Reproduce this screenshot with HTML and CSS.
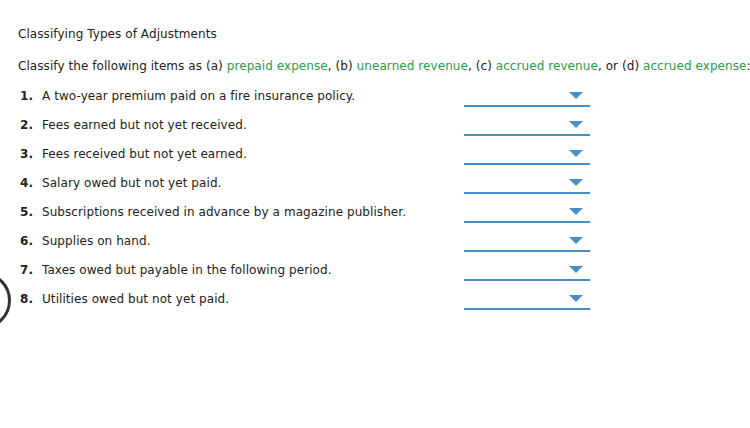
FILE: index.html
```html
<!DOCTYPE html>
<html>
<head>
<meta charset="utf-8">
<link rel="stylesheet" href="styles.css">
</head>
<body>
<div class="page">
  <div class="title">Classifying Types of Adjustments</div>
  <div class="intro">Classify the following items as (a) <span class="g">prepaid expense</span>, (b) <span class="g">unearned revenue</span>, (c) <span class="g">accrued revenue</span>, or (d) <span class="g">accrued expense</span>:</div>
  <ol class="items">
    <li class="item"><span class="num">1.</span><span class="text">A two-year premium paid on a fire insurance policy.</span><span class="sel"><span class="tri"></span></span></li>
    <li class="item"><span class="num">2.</span><span class="text">Fees earned but not yet received.</span><span class="sel"><span class="tri"></span></span></li>
    <li class="item"><span class="num">3.</span><span class="text">Fees received but not yet earned.</span><span class="sel"><span class="tri"></span></span></li>
    <li class="item"><span class="num">4.</span><span class="text">Salary owed but not yet paid.</span><span class="sel"><span class="tri"></span></span></li>
    <li class="item"><span class="num">5.</span><span class="text">Subscriptions received in advance by a magazine publisher.</span><span class="sel"><span class="tri"></span></span></li>
    <li class="item"><span class="num">6.</span><span class="text">Supplies on hand.</span><span class="sel"><span class="tri"></span></span></li>
    <li class="item"><span class="num">7.</span><span class="text">Taxes owed but payable in the following period.</span><span class="sel"><span class="tri"></span></span></li>
    <li class="item"><span class="num">8.</span><span class="text">Utilities owed but not yet paid.</span><span class="sel"><span class="tri"></span></span></li>
  </ol>
</div>
<div class="cursor"></div>
</body>
</html>
```
FILE: styles.css
```css
html, body {
  margin: 0;
  padding: 0;
  background: #fff;
  overflow: hidden;
}
body {
  width: 750px;
  height: 428px;
  position: relative;
  font-family: "DejaVu Sans", Verdana, sans-serif;
  font-size: 12px;
  letter-spacing: 0.07px;
  color: #222;
}
.page {
  padding: 26px 0 0 18px;
  white-space: nowrap;
}
.title {
  line-height: 16px;
  height: 16px;
}
.intro {
  margin-top: 16px;
  line-height: 16px;
}
.g { color: #2e9a4a; }
.items {
  list-style: none;
  margin: 14px 0 0 0;
  padding: 0;
}
.item {
  display: flex;
  align-items: flex-start;
  height: 29px;
  line-height: 16px;
}
.num {
  font-weight: bold;
  width: 24px;
  padding-left: 2px;
  box-sizing: border-box;
}
.text {
  width: 422px;
}
.sel {
  position: relative;
  display: block;
  width: 126px;
  height: 17px;
  border-bottom: 2px solid #4590c8;
}
.tri {
  position: absolute;
  right: 7px;
  top: 4px;
  width: 0;
  height: 0;
  border-left: 7px solid transparent;
  border-right: 7px solid transparent;
  border-top: 7px solid #4590c8;
}
.cursor {
  position: absolute;
  left: -46px;
  top: 272px;
  width: 51px;
  height: 51px;
  border: 3px solid #333;
  border-radius: 50%;
}
```
